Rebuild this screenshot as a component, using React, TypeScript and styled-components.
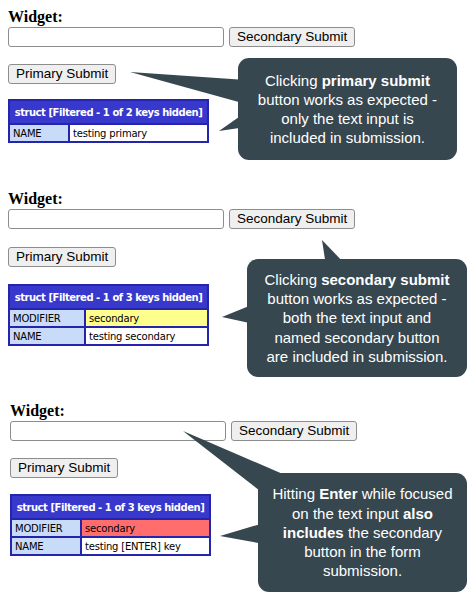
import styled, { createGlobalStyle } from 'styled-components';

const GlobalStyle = createGlobalStyle`
    html, body {
        margin: 0;
        padding: 0;
        background: #ffffff;
    }
`;

const CALLOUT = '#37474f';

const Page = styled.div`
    width: 474px;
    height: 604px;
    overflow: hidden;
    display: flex;
    flex-direction: column;
`;

const Section = styled.section<{ $height: number; $shift?: number }>`
    position: relative;
    height: ${(p) => p.$height}px;
    flex: none;
    padding: 8px 0 0 ${(p) => 8 + (p.$shift ?? 0)}px;
    box-sizing: border-box;
    display: flex;
    flex-direction: column;
    align-items: flex-start;
`;

const Heading = styled.h3`
    margin: 0 0 1px;
    font-family: 'Liberation Serif', 'Times New Roman', serif;
    font-weight: bold;
    font-size: 16px;
    line-height: 18px;
    color: #000;
`;

const InputRow = styled.div`
    display: flex;
    gap: 5px;
    align-items: center;
`;

const TextInput = styled.input`
    width: 216px;
    height: 20px;
    box-sizing: border-box;
    border: 1px solid #8d8d8d;
    border-radius: 3px;
    background: #fff;
    padding: 0 4px;
    margin: 0;
    font-family: 'Liberation Sans', Arial, sans-serif;
    font-size: 13px;
`;

const Button = styled.button<{ $gap?: number }>`
    height: 20px;
    box-sizing: border-box;
    margin: ${(p) => p.$gap ?? 0}px 0 0;
    padding: 0 7px;
    border: 1px solid #8d8d8d;
    border-radius: 3px;
    background: #efefef;
    color: #000;
    font-family: 'Liberation Sans', Arial, sans-serif;
    font-size: 13.5px;
    line-height: 18px;
`;

const StructTable = styled.table<{ $gap: number }>`
    margin-top: ${(p) => p.$gap}px;
    width: 201px;
    border-spacing: 2px;
    background: #2424ad;
    font-family: 'DejaVu Sans', Verdana, sans-serif;
    font-size: 10px;
    letter-spacing: -0.2px;
`;

const HeaderCell = styled.th`
    background: #3838cc;
    color: #fff;
    font-weight: bold;
    font-size: 10px;
    letter-spacing: -0.45px;
    height: 22px;
    padding: 0 1px;
    text-align: center;
    white-space: nowrap;
`;

const KeyCell = styled.td<{ $width: number }>`
    width: ${(p) => p.$width}px;
    background: #c8dbf8;
    color: #000;
    height: 16px;
    padding: 0 3px;
`;

const ValueCell = styled.td<{ $tone?: 'yellow' | 'red' }>`
    background: ${(p) => (p.$tone === 'yellow' ? '#ffff8c' : p.$tone === 'red' ? '#ff6d6d' : '#ffffff')};
    color: #000;
    height: 16px;
    padding: 0 3px;
`;

const Tails = styled.svg`
    position: absolute;
    left: 0;
    top: 0;
    overflow: visible;
    pointer-events: none;
`;

const Callout = styled.div<{ $left: number; $top: number; $width: number; $height: number }>`
    position: absolute;
    left: ${(p) => p.$left}px;
    top: ${(p) => p.$top}px;
    width: ${(p) => p.$width}px;
    height: ${(p) => p.$height}px;
    box-sizing: border-box;
    border-radius: 11px;
    background: ${CALLOUT};
    color: #fff;
    display: flex;
    align-items: center;
    justify-content: center;
    text-align: center;
    font-family: 'Liberation Sans', Arial, sans-serif;
    font-size: 15px;
    line-height: 19.2px;

    b {
        font-weight: bold;
    }
`;

type Row = { name: string; value: string; tone?: 'yellow' | 'red' };

const Struct = ({ hidden, rows, keyWidth, gap }: { hidden: string; rows: Row[]; keyWidth: number; gap: number }) => (
    <StructTable $gap={gap}>
        <tbody>
            <tr>
                <HeaderCell colSpan={2}>struct [Filtered - {hidden} keys hidden]</HeaderCell>
            </tr>
            {rows.map((r) => (
                <tr key={r.name}>
                    <KeyCell $width={keyWidth}>{r.name}</KeyCell>
                    <ValueCell $tone={r.tone}>{r.value}</ValueCell>
                </tr>
            ))}
        </tbody>
    </StructTable>
);

const Widget = ({ gap }: { gap: number }) => (
    <>
        <Heading>Widget:</Heading>
        <InputRow>
            <TextInput type="text" />
            <Button>Secondary Submit</Button>
        </InputRow>
        <Button $gap={gap}>Primary Submit</Button>
    </>
);

const App = () => {
    return (
        <Page>
            <GlobalStyle />

            <Section $height={182}>
                <Widget gap={17} />
                <Struct gap={15} hidden="1 of 2" keyWidth={52} rows={[{ name: 'NAME', value: 'testing primary' }]} />
                <Tails width={474} height={182}>
                    <polygon points="130,72 246,80 246,104" fill={CALLOUT} />
                    <polygon points="219,131 246,112 246,127" fill={CALLOUT} />
                </Tails>
                <Callout $left={238} $top={58} $width={219} $height={102}>
                    <div>
                        Clicking <b>primary submit</b>
                        <br />
                        button works as expected -
                        <br />
                        only the text input is
                        <br />
                        included in submission.
                    </div>
                </Callout>
            </Section>

            <Section $height={212}>
                <Widget gap={18} />
                <Struct
                    gap={17}
                    hidden="1 of 3"
                    keyWidth={68}
                    rows={[
                        { name: 'MODIFIER', value: 'secondary', tone: 'yellow' },
                        { name: 'NAME', value: 'testing secondary' },
                    ]}
                />
                <Tails width={474} height={212}>
                    <polygon points="322,58 326,84 347,84" fill={CALLOUT} />
                    <polygon points="222,135 254,122 254,142" fill={CALLOUT} />
                </Tails>
                <Callout $left={247} $top={77} $width={220} $height={118}>
                    <div>
                        Clicking <b>secondary submit</b>
                        <br />
                        button works as expected -
                        <br />
                        both the text input and
                        <br />
                        named secondary button
                        <br />
                        are included in submission.
                    </div>
                </Callout>
            </Section>

            <Section $height={210} $shift={2}>
                <Widget gap={17} />
                <Struct
                    gap={16}
                    hidden="1 of 3"
                    keyWidth={62}
                    rows={[
                        { name: 'MODIFIER', value: 'secondary', tone: 'red' },
                        { name: 'NAME', value: 'testing [ENTER] key' },
                    ]}
                />
                <Tails width={474} height={210}>
                    <polygon points="183,37 292,84 264,100" fill={CALLOUT} />
                    <polygon points="220,142 264,129 264,150" fill={CALLOUT} />
                </Tails>
                <Callout $left={258} $top={79} $width={209} $height={119}>
                    <div>
                        Hitting <b>Enter</b> while focused
                        <br />
                        on the text input <b>also</b>
                        <br />
                        <b>includes</b> the secondary
                        <br />
                        button in the form
                        <br />
                        submission.
                    </div>
                </Callout>
            </Section>
        </Page>
    );
};

export default App;
